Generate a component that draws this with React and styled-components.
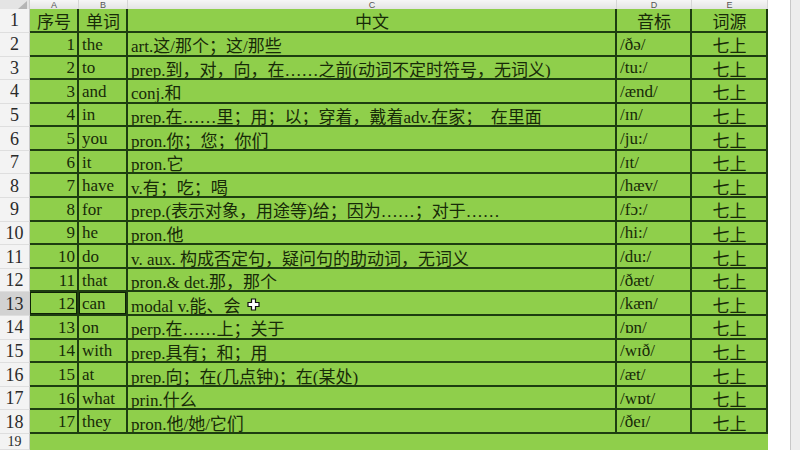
import React from 'react';
import styled, { createGlobalStyle } from 'styled-components';

const words = [
  ['the', 'art.这/那个；这/那些', '/ðə/'],
  ['to', 'prep.到，对，向，在……之前(动词不定时符号，无词义)', '/tu:/'],
  ['and', 'conj.和', '/ænd/'],
  ['in', 'prep.在……里；用；以；穿着，戴着adv.在家；  在里面', '/ɪn/'],
  ['you', 'pron.你；您；你们', '/ju:/'],
  ['it', 'pron.它', '/ɪt/'],
  ['have', 'v.有；吃；喝', '/hæv/'],
  ['for', 'prep.(表示对象，用途等)给；因为……；对于……', '/fɔ:/'],
  ['he', 'pron.他', '/hi:/'],
  ['do', 'v. aux. 构成否定句，疑问句的助动词，无词义', '/du:/'],
  ['that', 'pron.& det.那，那个', '/ðæt/'],
  ['can', 'modal v.能、会', '/kæn/'],
  ['on', 'perp.在……上；关于', '/ɒn/'],
  ['with', 'prep.具有；和；用', '/wɪð/'],
  ['at', 'prep.向；在(几点钟)；在(某处)', '/æt/'],
  ['what', 'prin.什么', '/wɒt/'],
  ['they', 'pron.他/她/它们', '/ðeɪ/'],
];

const COLS = '30px 49px 49px 489px 75px 76px';

function App() {
  return (
    <Page>
      <GlobalStyle />
      <Sheet>
        <LetterRow>
          <Corner />
          {['A', 'B', 'C', 'D', 'E'].map(l => (
            <Letter key={l}>{l}</Letter>
          ))}
        </LetterRow>
        <Row $h={24}>
          <RowHead>1</RowHead>
          <Cell $align="center">序号</Cell>
          <Cell $align="center">单词</Cell>
          <Cell $align="center">中文</Cell>
          <Cell $align="center">音标</Cell>
          <Cell $align="center">词源</Cell>
        </Row>
        {words.map((w, i) => (
          <Row $h={23.6} key={w[0]}>
            <RowHead $active={i === 11}>{i + 2}</RowHead>
            <Cell $align="right" $selected={i === 11}>{i + 1}</Cell>
            <Cell $selected={i === 11}>{w[0]}</Cell>
            <Cell>
              {w[1]}
              {i === 11 && (
                <Cursor width="13" height="13" viewBox="0 0 13 13">
                  <path
                    d="M4.5 1h4v3.5H12v4H8.5V12h-4V8.5H1v-4h3.5z"
                    fill="#fff"
                    stroke="#111"
                    strokeWidth="1.2"
                  />
                </Cursor>
              )}
            </Cell>
            <Cell>{w[2]}</Cell>
            <Cell $align="center">七上</Cell>
          </Row>
        ))}
        <Row $h={16}>
          <RowHead $small>19</RowHead>
          <BlankFill />
        </Row>
      </Sheet>
      <Gutter>
        <Track />
      </Gutter>
    </Page>
  );
}

export default App;

const GlobalStyle = createGlobalStyle`
  html, body {
    margin: 0;
    padding: 0;
    background: #ffffff;
    overflow: hidden;
  }
`;

const Page = styled.div`
  width: 800px;
  height: 450px;
  display: flex;
  overflow: hidden;
  font-family: 'Liberation Serif', 'Noto Sans CJK SC', serif;
`;

const Sheet = styled.div`
  width: 768px;
  display: flex;
  flex-direction: column;
`;

const LetterRow = styled.div`
  display: grid;
  grid-template-columns: ${COLS};
  height: 10px;
  overflow: hidden;
  background: #ececec;
`;

const Corner = styled.div`
  position: relative;
  background: #e4e4e4;
  border-right: 1px solid #d0d0d0;
  &::after {
    content: '';
    position: absolute;
    right: 2px;
    bottom: 1px;
    border-left: 9px solid transparent;
    border-bottom: 8px solid #b5b5b5;
  }
`;

const Letter = styled.div`
  text-align: center;
  font-family: 'Liberation Sans', sans-serif;
  font-size: 9px;
  line-height: 10px;
  color: #555;
  border-right: 1px solid #d6d6d6;
  background: linear-gradient(#f6f6f6, #e2e2e2);
`;

const Row = styled.div`
  display: grid;
  grid-template-columns: ${COLS};
  height: ${p => p.$h}px;
  flex-shrink: 0;
`;

const RowHead = styled.div`
  display: flex;
  align-items: center;
  justify-content: center;
  font-size: ${p => (p.$small ? '14px' : '18px')};
  line-height: 1;
  color: #2a2a2a;
  background: ${p => (p.$active ? '#d2d2d2' : '#f3f3f3')};
  border-right: 1px solid #c9c9c9;
  border-bottom: 1px solid #dedede;
`;

const Cell = styled.div`
  display: flex;
  align-items: center;
  justify-content: ${p =>
    p.$align === 'center' ? 'center' : p.$align === 'right' ? 'flex-end' : 'flex-start'};
  padding: 2px 2px 0 3px;
  font-size: 17px;
  color: #172a08;
  white-space: pre;
  overflow: hidden;
  background: #8fcf4b;
  border-right: 2px solid #1d3d10;
  border-bottom: 2px solid #1d3d10;
  box-shadow: ${p => (p.$selected ? 'inset 0 0 0 1px #0e2206' : 'none')};
`;

const BlankFill = styled.div`
  grid-column: 2 / span 5;
  background: #8fcf4b;
`;

const Cursor = styled.svg`
  margin-left: 7px;
  flex-shrink: 0;
`;

const Gutter = styled.div`
  flex: 1;
  display: flex;
  justify-content: flex-end;
  background: #ffffff;
`;

const Track = styled.div`
  width: 9px;
  background: #ededed;
  border-left: 1px solid #c8c8c8;
`;
